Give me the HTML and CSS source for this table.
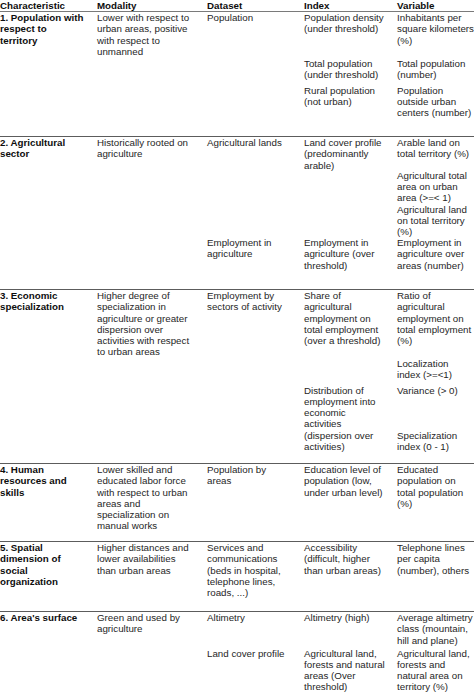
FILE: index.html
```html
<!DOCTYPE html>
<html>
<head>
<meta charset="utf-8">
<link rel="stylesheet" href="styles.css">
</head>
<body>
<div class="table">
  <div class="head">
    <div>Characteristic</div>
    <div>Modality</div>
    <div>Dataset</div>
    <div>Index</div>
    <div>Variable</div>
  </div>

  <div class="row r1">
    <div class="ch">1. Population with<br>respect to<br>territory</div>
    <div class="mod">Lower with respect to<br>urban areas, positive<br>with respect to<br>unmanned</div>
    <div class="ds s1">Population</div>
    <div class="ix s1">Population density<br>(under threshold)</div>
    <div class="ix s2">Total population<br>(under threshold)</div>
    <div class="ix s3">Rural population<br>(not urban)</div>
    <div class="var s1">Inhabitants per<br>square kilometers<br>(%)</div>
    <div class="var s2">Total population<br>(number)</div>
    <div class="var s3">Population<br>outside urban<br>centers (number)</div>
  </div>

  <div class="row r2">
    <div class="ch">2. Agricultural<br>sector</div>
    <div class="mod">Historically rooted on<br>agriculture</div>
    <div class="ds s1-3">Agricultural lands</div>
    <div class="ds s4">Employment in<br>agriculture</div>
    <div class="ix s1-3">Land cover profile<br>(predominantly<br>arable)</div>
    <div class="ix s4">Employment in<br>agriculture (over<br>threshold)</div>
    <div class="var s1">Arable land on<br>total territory (%)</div>
    <div class="var s2">Agricultural total<br>area on urban<br>area (&gt;=&lt; 1)</div>
    <div class="var s3">Agricultural land<br>on total territory<br>(%)</div>
    <div class="var s4">Employment in<br>agriculture over<br>areas (number)</div>
  </div>

  <div class="row r3">
    <div class="ch">3. Economic<br>specialization</div>
    <div class="mod">Higher degree of<br>specialization in<br>agriculture or greater<br>dispersion over<br>activities with respect<br>to urban areas</div>
    <div class="ds all">Employment by<br>sectors of activity</div>
    <div class="ix s1-2">Share of<br>agricultural<br>employment on<br>total employment<br>(over a threshold)</div>
    <div class="ix s3-4">Distribution of<br>employment into<br>economic<br>activities<br>(dispersion over<br>activities)</div>
    <div class="var s1">Ratio of<br>agricultural<br>employment on<br>total employment<br>(%)</div>
    <div class="var s2">Localization<br>index (&gt;=&lt;1)</div>
    <div class="var s3">Variance (&gt; 0)</div>
    <div class="var s4">Specialization<br>index (0 - 1)</div>
  </div>

  <div class="row r4">
    <div class="ch">4. Human<br>resources and<br>skills</div>
    <div class="mod">Lower skilled and<br>educated labor force<br>with respect to urban<br>areas and<br>specialization on<br>manual works</div>
    <div class="ds s1">Population by<br>areas</div>
    <div class="ix s1">Education level of<br>population (low,<br>under urban level)</div>
    <div class="var s1">Educated<br>population on<br>total population<br>(%)</div>
  </div>

  <div class="row r5">
    <div class="ch">5. Spatial<br>dimension of<br>social<br>organization</div>
    <div class="mod">Higher distances and<br>lower availabilities<br>than urban areas</div>
    <div class="ds s1">Services and<br>communications<br>(beds in hospital,<br>telephone lines,<br>roads, ...)</div>
    <div class="ix s1">Accessibility<br>(difficult, higher<br>than urban areas)</div>
    <div class="var s1">Telephone lines<br>per capita<br>(number), others</div>
  </div>

  <div class="row r6">
    <div class="ch">6. Area's surface</div>
    <div class="mod">Green and used by<br>agriculture</div>
    <div class="ds s1">Altimetry</div>
    <div class="ds s2">Land cover profile</div>
    <div class="ix s1">Altimetry (high)</div>
    <div class="ix s2">Agricultural land,<br>forests and natural<br>areas (Over<br>threshold)</div>
    <div class="var s1">Average altimetry<br>class (mountain,<br>hill and plane)</div>
    <div class="var s2">Agricultural land,<br>forests and<br>natural area on<br>territory (%)</div>
  </div>
</div>
</body>
</html>
```

FILE: styles.css
```css
html, body {
  margin: 0;
  padding: 0;
  background: #ffffff;
  overflow: hidden;
}

body {
  font-family: "Liberation Sans", Arial, sans-serif;
  font-size: 9.75px;
  line-height: 11.25px;
  color: #262626;
  white-space: nowrap;
}

.table {
  width: 474px;
}

.head,
.row {
  display: grid;
  grid-template-columns: 97px 110px 97px 93px 77px;
}

.head {
  height: 11px;
  border-bottom: 1px solid #7a7a7a;
  font-weight: bold;
  color: #0d0d0d;
}

.row {
  border-top: 1px solid #5c5c5c;
}

.head + .row {
  border-top: none;
}

.r1 { grid-template-rows: 45.5px 27px 51.5px; }
.r2 { grid-template-rows: 32.5px 34px 33.5px 52px; }
.r3 { grid-template-rows: 67.5px 27px 45px 33.5px; }
.r4 { grid-template-rows: 77px; }
.r5 { grid-template-rows: 69px; }
.r6 { grid-template-rows: 35.5px 50px; }

.ch {
  grid-column: 1;
  grid-row: 1 / -1;
  font-weight: bold;
  color: #0d0d0d;
}

.mod { grid-column: 2; grid-row: 1 / -1; }
.ds  { grid-column: 3; }
.ix  { grid-column: 4; }
.var { grid-column: 5; }

.s1   { grid-row: 1; }
.s2   { grid-row: 2; }
.s3   { grid-row: 3; }
.s4   { grid-row: 4; }
.s1-2 { grid-row: 1 / 3; }
.s1-3 { grid-row: 1 / 4; }
.s3-4 { grid-row: 3 / 5; }
.all  { grid-row: 1 / -1; }
```
